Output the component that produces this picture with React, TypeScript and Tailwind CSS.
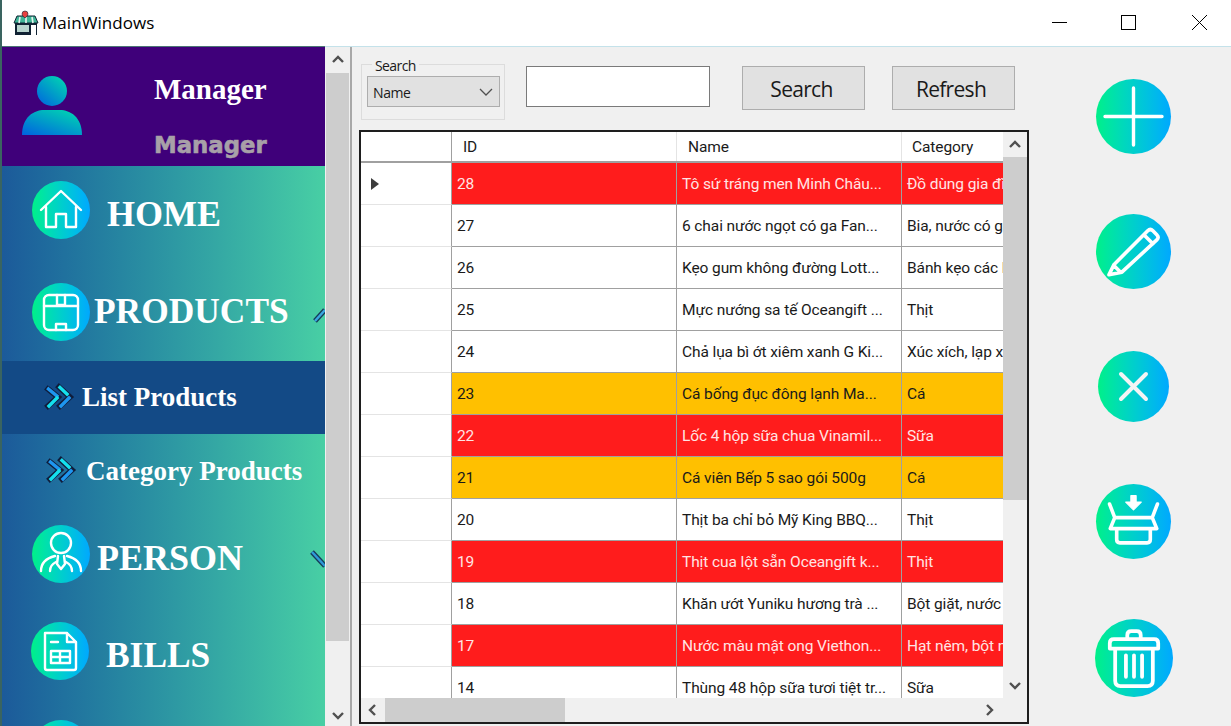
import type { ReactNode } from "react";

const rows = [
  { id: 28, name: "Tô sứ tráng men Minh Châu...", category: "Đồ dùng gia đình", tone: "red" },
  { id: 27, name: "6 chai nước ngọt có ga Fan...", category: "Bia, nước có ga", tone: "" },
  { id: 26, name: "Kẹo gum không đường Lott...", category: "Bánh kẹo các loại", tone: "" },
  { id: 25, name: "Mực nướng sa tế Oceangift ...", category: "Thịt", tone: "" },
  { id: 24, name: "Chả lụa bì ớt xiêm xanh G Ki...", category: "Xúc xích, lạp xưởng", tone: "" },
  { id: 23, name: "Cá bống đục đông lạnh Ma...", category: "Cá", tone: "orange" },
  { id: 22, name: "Lốc 4 hộp sữa chua Vinamil...", category: "Sữa", tone: "red" },
  { id: 21, name: "Cá viên Bếp 5 sao gói 500g", category: "Cá", tone: "orange" },
  { id: 20, name: "Thịt ba chỉ bỏ Mỹ King BBQ...", category: "Thịt", tone: "" },
  { id: 19, name: "Thịt cua lột sẵn Oceangift k...", category: "Thịt", tone: "red" },
  { id: 18, name: "Khăn ướt Yuniku hương trà ...", category: "Bột giặt, nước xả", tone: "" },
  { id: 17, name: "Nước màu mật ong Viethon...", category: "Hạt nêm, bột ngọt", tone: "red" },
  { id: 14, name: "Thùng 48 hộp sữa tươi tiệt tr...", category: "Sữa", tone: "" },
];

const toneClass = (tone: string) => {
  if (tone === "red") return "bg-[#ff1c1c] text-[#ffe4e4]";
  if (tone === "orange") return "bg-[#ffc000] text-[#1a1a1a]";
  return "bg-white text-[#1a1a1a]";
};

const Arrow = ({ dir }: { dir: "up" | "down" | "left" | "right" }) => {
  const d = {
    up: "M2 9 L7 4 L12 9",
    down: "M2 5 L7 10 L12 5",
    left: "M9 2 L4 7 L9 12",
    right: "M5 2 L10 7 L5 12",
  }[dir];
  return (
    <svg width="14" height="14" viewBox="0 0 14 14" fill="none" stroke="#505050" strokeWidth="2.4">
      <path d={d} />
    </svg>
  );
};

const Badge = ({ size = 58, className = "", children }: { size?: number; className?: string; children: ReactNode }) => (
  <div
    className={`rounded-full bg-gradient-to-r from-[#00f088] to-[#00a8ff] flex items-center justify-center shrink-0 ${className}`}
    style={{ width: size, height: size }}
  >
    {children}
  </div>
);

const Glyph = ({ size = 58, width = 2.4, children }: { size?: number; width?: number; children: ReactNode }) => (
  <svg
    width={size}
    height={size}
    viewBox="0 0 58 58"
    fill="none"
    stroke="white"
    strokeWidth={width}
    strokeLinecap="round"
    strokeLinejoin="round"
  >
    {children}
  </svg>
);

const Chevrons = () => (
  <svg width="34" height="34" viewBox="0 0 34 34" fill="none" strokeLinecap="square">
    <path d="M5 8 L15 16 L5 25" stroke="#101c3a" strokeWidth="5.5" />
    <path d="M16 6 L27 16 L17 25" stroke="#101c3a" strokeWidth="5.5" />
    <path d="M5.5 8 L14 15" stroke="#1e96f0" strokeWidth="3.4" />
    <path d="M14 17 L6 25" stroke="#14e0ee" strokeWidth="3.4" />
    <path d="M17 6.5 L24 13" stroke="#14e0ee" strokeWidth="3.4" />
    <path d="M26 17 L18 25" stroke="#1e96f0" strokeWidth="3.4" />
  </svg>
);

const NavItem = ({ children, height = "h-[98px]" }: { children: ReactNode; height?: string }) => (
  <div className={`relative ${height} shrink-0 flex items-center bg-gradient-to-r from-[#1c5a9a] to-[#48cfa4]`}>
    {children}
  </div>
);

const navLabel = "font-['Liberation_Serif',serif] font-bold text-white leading-none";

const Sidebar = () => (
  <div className="w-[323px] h-[calc(100%+1px)] -mt-px border-t border-[#4b7575] flex flex-col overflow-hidden shrink-0">
    <div className="h-[119px] shrink-0 bg-[#3f007a] flex">
      <svg className="ml-[18px] mt-[28px]" width="64" height="64" viewBox="0 0 64 64">
        <defs>
          <linearGradient id="user" x1="0.9" y1="0" x2="0.05" y2="1">
            <stop offset="0" stopColor="#00d8b0" />
            <stop offset="1" stopColor="#0064e0" />
          </linearGradient>
        </defs>
        <circle cx="32" cy="16" r="15" fill="url(#user)" />
        <path d="M2 60 C2 42 14 35 24 35 H40 C50 35 62 42 62 60 Z" fill="url(#user)" />
      </svg>
      <div className="ml-[70px] flex flex-col">
        <span className={`${navLabel} text-[29px] mt-[28px] text-[#f4eeff]`}>Manager</span>
        <span className="font-['DejaVu_Sans',sans-serif] font-bold text-[22.8px] leading-none mt-[30px] text-[#a8a0a8] [-webkit-text-stroke:0.6px_#a8a0a8]">
          Manager
        </span>
      </div>
    </div>

    <NavItem>
      <Badge className="ml-[30px] -mt-[11px]">
        <Glyph>
          <path d="M9 29 L29 10 L49 29 M14 26 V46 H24 V33 H34 V46 H44 V26" />
        </Glyph>
      </Badge>
      <span className={`${navLabel} text-[36px] ml-[17px] -mt-[3px]`}>HOME</span>
    </NavItem>

    <NavItem height="h-[97px]">
      <Badge className="ml-[30px] -mt-[2px]">
        <Glyph>
          <rect x="12" y="12" width="34" height="35" rx="5" />
          <path d="M12 23 H46 M25 12 V22 H33 V12 M24 47 V41 H34 V47" />
        </Glyph>
      </Badge>
      <span className={`${navLabel} text-[35.4px] ml-[4px] mt-[-1px]`}>PRODUCTS</span>
      <svg className="absolute right-0 top-[40px]" width="12" height="19" viewBox="0 0 12 19" fill="none">
        <path d="M2 17 L12 6" stroke="#153a58" strokeWidth="5" />
        <path d="M2 17 L12 6" stroke="#39a8e0" strokeWidth="2.5" />
      </svg>
    </NavItem>

    <div className="h-[73px] shrink-0 bg-[#134a86] flex items-center">
      <div className="ml-[41px]">
        <Chevrons />
      </div>
      <span className={`${navLabel} text-[27px] ml-[5px]`}>List Products</span>
    </div>

    <NavItem height="h-[74px]">
      <div className="ml-[43px]">
        <Chevrons />
      </div>
      <span className={`${navLabel} text-[27px] ml-[7px]`}>Category Products</span>
    </NavItem>

    <NavItem>
      <Badge className="ml-[30px] -mt-[7px]">
        <Glyph>
          <circle cx="29" cy="18" r="10" />
          <path d="M9 46 C9 37 15 33 23 31 M49 46 C49 37 43 33 35 31 M18 46 C18 41 20 39 24 37 M40 46 C40 41 38 39 34 37 M26 31 L25 39 L29 44 L33 39 L32 31" />
        </Glyph>
      </Badge>
      <span className={`${navLabel} text-[36px] ml-[7px] mt-[1px]`}>PERSON</span>
      <svg className="absolute right-0 top-[40px]" width="15" height="22" viewBox="0 0 15 22" fill="none">
        <path d="M2 4 L15 18" stroke="#153a58" strokeWidth="5" />
        <path d="M2 4 L15 18" stroke="#2f9ad8" strokeWidth="2.5" />
      </svg>
    </NavItem>

    <NavItem>
      <Badge className="ml-[29px] -mt-[8px]">
        <Glyph>
          <path d="M14 11 H36 L45 20 V46 Q45 48 43 48 H16 Q14 48 14 46 Z M36 11 V20 H45" />
          <path d="M20 20 H27 M20 29 H39 V41 H20 Z M20 35 H39 M29 29 V41" />
        </Glyph>
      </Badge>
      <span className={`${navLabel} text-[35.4px] ml-[17px] mt-[2px]`}>BILLS</span>
    </NavItem>

    <NavItem height="h-[60px]">
      <Badge className="ml-[30px] self-start mt-[16px]">
        <span />
      </Badge>
    </NavItem>
  </div>
);

const Scrollbar = () => (
  <div className="w-[25px] h-full bg-[#f0f0f0] flex flex-col items-center shrink-0">
    <div className="h-[26px] flex items-center justify-center shrink-0">
      <Arrow dir="up" />
    </div>
    <div className="w-[23px] h-[568px] bg-[#cdcdcd] shrink-0" />
    <div className="mt-auto h-[22px] flex items-center justify-center shrink-0">
      <Arrow dir="down" />
    </div>
  </div>
);

const Toolbar = () => (
  <div className="h-[83px] flex items-start shrink-0 text-[#1a1a1a] font-['Open_Sans',sans-serif]">
    <div className="relative w-[144px] h-[56px] mt-[17px] ml-[9px] border border-[#dcdcdc] px-[5px] pt-[11px]">
      <span className="absolute left-[10px] -top-[7px] px-[3px] bg-[#f0f0f0] text-[14px] leading-[16px] tracking-[-0.6px]">
        Search
      </span>
      <div className="w-[133px] h-[31px] bg-[#e1e1e1] border border-[#adadad] flex items-center justify-between pl-[5px] pr-[5px]">
        <span className="text-[14px] tracking-[-0.4px] pt-[2px]">Name</span>
        <svg width="16" height="10" viewBox="0 0 16 10" fill="none" stroke="#505050" strokeWidth="1.3">
          <path d="M2 2 L8 8 L14 2" />
        </svg>
      </div>
    </div>
    <div className="w-[184px] h-[41px] mt-[19px] ml-[21px] bg-white border border-[#7a7a7a]" />
    <button className="w-[123px] h-[44px] mt-[19px] ml-[32px] pt-[4px] pr-[4px] bg-[#e1e1e1] border border-[#adadad] text-[21px] font-medium tracking-[-0.7px]">
      Search
    </button>
    <button className="w-[123px] h-[44px] mt-[19px] ml-[27px] pt-[4px] pr-[5px] bg-[#e1e1e1] border border-[#adadad] text-[21px] font-medium tracking-[-0.7px]">
      Refresh
    </button>
  </div>
);

const cellText = "font-['Roboto',sans-serif] text-[15.5px] tracking-[-0.1px] whitespace-nowrap overflow-hidden";

const Grid = () => (
  <div className="w-[670px] h-[594px] ml-[7px] border-2 border-[#1e1e1e] bg-[#f0f0f0] flex flex-col shrink-0">
    <div className="flex flex-1 min-h-0">
      <div className="w-[642px] overflow-hidden bg-white flex flex-col">
        <div className={`flex h-[31px] shrink-0 bg-white text-[#1a1a1a] border-b-2 border-[#a0a0a0] ${cellText}`}>
          <div className="w-[91px] border-r border-[#a0a0a0]" />
          <div className="w-[225px] border-r border-[#e4e4e4] pl-[11px] pt-[3px] flex items-center">ID</div>
          <div className="w-[225px] border-r border-[#e4e4e4] pl-[11px] pt-[3px] flex items-center">Name</div>
          <div className="w-[101px] pl-[10px] pt-[3px] flex items-center">Category</div>
        </div>
        {rows.map((row, i) => (
          <div key={row.id} className={`flex h-[42px] shrink-0 ${cellText}`}>
            <div className="w-[91px] bg-white border-r border-[#a0a0a0] border-b border-b-[#e4e4e4] flex items-center pl-[9px] shrink-0">
              {i === 0 && (
                <svg width="10" height="14" viewBox="0 0 10 14">
                  <path d="M1 1 L9 7 L1 13 Z" fill="#3c3c3c" />
                </svg>
              )}
            </div>
            <div className={`w-[225px] shrink-0 border-r border-b border-[#a0a0a0] pl-[5px] pt-[2px] flex items-center ${toneClass(row.tone)}`}>
              {row.id}
            </div>
            <div className={`w-[225px] shrink-0 border-r border-b border-[#a0a0a0] pl-[5px] pt-[2px] flex items-center ${toneClass(row.tone)}`}>
              {row.name}
            </div>
            <div className={`w-[101px] shrink-0 border-b border-[#a0a0a0] pl-[5px] pt-[2px] flex items-center overflow-hidden ${toneClass(row.tone)}`}>
              {row.category}
            </div>
          </div>
        ))}
      </div>
      <div className="w-[24px] flex flex-col items-center bg-[#f0f0f0]">
        <div className="h-[25px] flex items-center justify-center shrink-0">
          <Arrow dir="up" />
        </div>
        <div className="w-full h-[343px] bg-[#cdcdcd] shrink-0" />
        <div className="mt-auto h-[26px] flex items-center justify-center shrink-0">
          <Arrow dir="down" />
        </div>
      </div>
    </div>
    <div className="h-[24px] flex items-center shrink-0 bg-[#f0f0f0]">
      <div className="w-[24px] flex items-center justify-center shrink-0">
        <Arrow dir="left" />
      </div>
      <div className="w-[180px] h-full bg-[#cdcdcd] shrink-0" />
      <div className="ml-auto mr-[31px] flex items-center">
        <Arrow dir="right" />
      </div>
    </div>
  </div>
);

const Actions = () => (
  <div className="w-[200px] h-full flex flex-col items-center shrink-0 pt-[32px] pl-[11px] -ml-[1px]">
    <Badge size={75}>
      <svg width="75" height="75" viewBox="0 0 75 75" stroke="white" strokeWidth="3.4" strokeLinecap="round">
        <path d="M37.5 9 V66 M9 37.5 H66" />
      </svg>
    </Badge>
    <Badge size={75} className="mt-[60px]">
      <Glyph size={75} width={2.8}>
        <path d="M10 47 L14 39 L40 13 Q42 11 44 13 L47 16 Q49 18 47 20 L20 45 Z M37 16 L44 23 M14 40 L19 45" />
      </Glyph>
    </Badge>
    <Badge size={71} className="mt-[62px]">
      <svg width="71" height="71" viewBox="0 0 71 71" stroke="#f4f4f4" strokeWidth="4" strokeLinecap="round">
        <path d="M23 23 L48 48 M48 23 L23 48" />
      </svg>
    </Badge>
    <Badge size={75} className="mt-[62px]">
      <Glyph size={75} width={2.8}>
        <path d="M27 9 H31 V14 H35 L29 20 L23 14 H27 Z" fill="white" strokeWidth="1" />
        <path d="M10.5 15.5 L14.5 26 M47.5 15.5 L43.5 26 M11 34.5 L14.5 26 H43.5 L47 34.5 Z M16 34.5 V43 Q16 45.5 18.5 45.5 H39.5 Q42 45.5 42 43 V34.5" />
      </Glyph>
    </Badge>
    <Badge size={78} className="mt-[60px]">
      <Glyph size={78} width={2.8}>
        <path d="M11 18 Q11 15 14 15 H44 Q47 15 47 18 V22 H11 Z M24 15 V12 Q24 9 27 9 H31 Q34 9 34 12 V15 M15 22 V46 Q15 50 19 50 H39 Q43 50 43 46 V22 M23 27 V43 M29 27 V43 M35 27 V43" />
      </Glyph>
    </Badge>
  </div>
);

export default function App() {
  return (
    <div className="w-[1231px] h-[726px] overflow-hidden bg-[#f0f0f0] flex flex-col border-l-2 border-[#3a6460]">
      <div className="h-[46px] bg-white flex items-center shrink-0 relative">
        <svg className="ml-[11px]" width="26" height="26" viewBox="0 0 26 26">
          <rect x="2" y="12" width="22" height="13" fill="#123" />
          <rect x="4" y="15" width="12" height="7" fill="#b8d4ce" />
          <rect x="18" y="15" width="5" height="10" fill="#fff" />
          <path d="M1 13 L4 6 H22 L25 13 Z" fill="#3fb497" stroke="#123" strokeWidth="1" />
          <path d="M7 7 L6 13 M13 7 V13 M19 7 L20 13" stroke="#e8f4f0" strokeWidth="1.6" />
          <path d="M12 1 a3 3 0 0 1 3 3 q0 2 -3 4 q-3 -2 -3 -4 a3 3 0 0 1 3 -3 Z" fill="#e84040" stroke="#123" strokeWidth="0.6" />
        </svg>
        <span className="ml-[3px] text-[17px] text-black font-['Open_Sans',sans-serif] tracking-[0.05px]">MainWindows</span>
        <div className="absolute left-[1050px] top-[22px] w-[15px] h-px bg-black" />
        <div className="absolute left-[1119px] top-[15px] w-[15px] h-[15px] border border-black" />
        <svg className="absolute left-[1190px] top-[15px]" width="15" height="15" viewBox="0 0 15 15" stroke="black" strokeWidth="1">
          <path d="M0 0 L15 15 M15 0 L0 15" />
        </svg>
      </div>
      <div className="flex-1 min-h-0 flex border-t border-[#c4e2ea]">
        <Sidebar />
        <Scrollbar />
        <div className="w-[2px] bg-[#a8a8a8] shrink-0" />
        <div className="w-[677px] shrink-0 flex flex-col">
          <Toolbar />
          <Grid />
        </div>
        <Actions />
      </div>
    </div>
  );
}
